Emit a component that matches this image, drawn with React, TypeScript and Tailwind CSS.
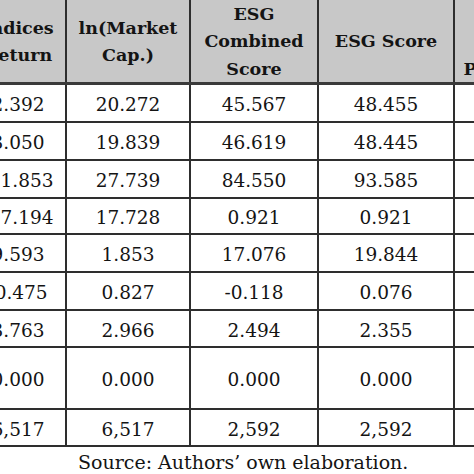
import React from "react";

const headers: string[][] = [
  ["Indices", "Return"],
  ["ln(Market", "Cap.)"],
  ["ESG", "Combined", "Score"],
  ["ESG Score"],
  ["ESG", "Social", "Pillar Score"],
];

const rows: { h: string; v: string[] }[] = [
  { h: "h-[38px]", v: ["2.392", "20.272", "45.567", "48.455", "45.111"] },
  { h: "h-[38px]", v: ["3.050", "19.839", "46.619", "48.445", "47.280"] },
  { h: "h-[38px]", v: ["-11.853", "27.739", "84.550", "93.585", "96.150"] },
  { h: "h-[36px]", v: ["-17.194", "17.728", "0.921", "0.921", "0.215"] },
  { h: "h-[38px]", v: ["9.593", "1.853", "17.076", "19.844", "22.530"] },
  { h: "h-[38px]", v: ["-0.475", "0.827", "-0.118", "0.076", "0.063"] },
  { h: "h-[37px]", v: ["3.763", "2.966", "2.494", "2.355", "2.120"] },
  { h: "h-[62px]", v: ["0.000", "0.000", "0.000", "0.000", "0.000"] },
  { h: "h-[37px]", v: ["6,517", "6,517", "2,592", "2,592", "2,592"] },
];

const widths = ["w-[96px]", "w-[124px]", "w-[128px]", "w-[136px]", "w-[134px]"];

export default function App() {
  return (
    <div
      className="w-[474px] h-[474px] overflow-hidden bg-white text-[#141414]"
      style={{ fontFamily: '"DejaVu Serif", "Liberation Serif", serif' }}
    >
      <div className="ml-[-29px] flex flex-col w-[618px]">
        <div className="flex h-[85px] bg-[#c8c8c8] border-b-[3px] border-[#3a3a3a]">
          {headers.map((lines, i) => (
            <div
              key={i}
              className={`${widths[i]} shrink-0 border-r-2 border-[#2e2e2e] flex flex-col items-center justify-center pt-[2px] text-[17.5px] leading-[27.5px] font-bold whitespace-nowrap`}
            >
              {lines.map((l, j) => (
                <span key={j}>{l}</span>
              ))}
            </div>
          ))}
        </div>
        {rows.map((r, ri) => (
          <div key={ri} className={`flex ${r.h} border-b-2 border-[#2e2e2e]`}>
            {r.v.map((val, ci) => (
              <div
                key={ci}
                className={`${widths[ci]} shrink-0 border-r-2 border-[#2e2e2e] flex items-center justify-center text-[18.5px] pt-[4px] whitespace-nowrap`}
              >
                {val}
              </div>
            ))}
          </div>
        ))}
      </div>
      <div className="pl-[78px] pt-[3px] text-[19px] leading-[24px] whitespace-nowrap">
        Source: Authors’ own elaboration.
      </div>
    </div>
  );
}
